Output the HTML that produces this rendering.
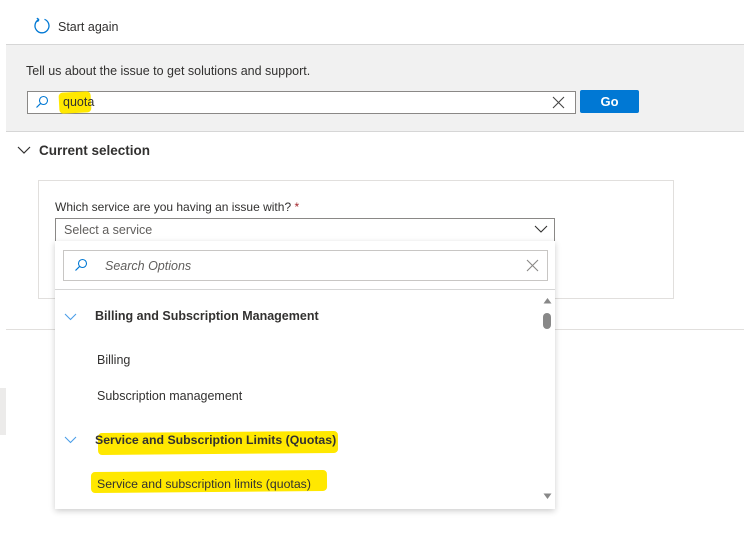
<!DOCTYPE html>
<html><head><style>
body{margin:0;width:744px;height:553px;background:#fff;font-family:"Liberation Sans",sans-serif;color:#323130;position:relative;overflow:hidden}
.a{position:absolute}
.hl{position:absolute;background:#ffe800;border-radius:4px}
</style></head><body>
<svg class="a" style="left:33px;top:17px" width="18" height="18" viewBox="0 0 18 18"><path d="M6 2.5A7 7 0 1 0 11.5 2.3" fill="none" stroke="#0078d4" stroke-width="1.3"/><path d="M6 2.5L3.8 1.2M6 2.5L4.5 4.8" stroke="#0078d4" stroke-width="1.2" fill="none"/></svg>
<div class="a" style="left:58px;top:20px;font-size:12.5px">Start again</div>
<div class="a" style="left:6px;top:44px;width:738px;height:86px;background:#f1f1f1;border-top:1px solid #d6d6d6;border-bottom:1px solid #d6d6d6"></div>
<div class="a" style="left:26px;top:64px;font-size:12.5px">Tell us about the issue to get solutions and support.</div>
<div class="a" style="left:27px;top:91px;width:547px;height:21px;background:#fff;border:1px solid #8a8886"></div>
<svg class="a" style="left:35px;top:95px" width="14" height="14" viewBox="0 0 14 14"><circle cx="8.5" cy="5.5" r="4" fill="none" stroke="#0078d4" stroke-width="1.1"/><path d="M5.6 8.4L1.5 12.5" stroke="#0078d4" stroke-width="1.2"/></svg>
<div class="hl" style="left:59px;top:92px;width:32px;height:21px;transform:rotate(-3deg)"></div>
<div class="a" style="left:63px;top:95px;font-size:12.5px">quota</div>
<svg class="a" style="left:552px;top:96px" width="13" height="13"><path d="M1 1L12 12M12 1L1 12" stroke="#444" stroke-width="1.1"/></svg>
<div class="a" style="left:580px;top:90px;width:59px;height:23px;background:#0078d4;border-radius:2px;color:#fff;font-weight:bold;font-size:13px;text-align:center;line-height:24px">Go</div>
<svg class="a" style="left:17px;top:145px" width="14" height="10"><path d="M1 2L7 8L13 2" fill="none" stroke="#323130" stroke-width="1.2"/></svg>
<div class="a" style="left:39px;top:143px;font-size:13.5px;font-weight:bold">Current selection</div>
<div class="a" style="left:38px;top:180px;width:634px;height:117px;border:1px solid #e1dfdd"></div>
<div class="a" style="left:6px;top:329px;width:738px;height:1px;background:#e1dfdd"></div>
<div class="a" style="left:0;top:388px;width:6px;height:47px;background:#ecebea"></div>
<div class="a" style="left:55px;top:200px;font-size:12px">Which service are you having an issue with? <span style="color:#a4262c">*</span></div>
<div class="a" style="left:55px;top:218px;width:498px;height:22px;border:1px solid #8a8886;background:#fff"></div>
<div class="a" style="left:64px;top:223px;font-size:12.5px;color:#605e5c">Select a service</div>
<svg class="a" style="left:534px;top:225px" width="14" height="9"><path d="M1 1L7 7L13 1" fill="none" stroke="#323130" stroke-width="1.1"/></svg>
<div class="a" style="left:55px;top:241px;width:500px;height:268px;background:#fff;box-shadow:0 2px 6px rgba(0,0,0,.2)"></div>
<div class="a" style="left:63px;top:250px;width:483px;height:29px;border:1px solid #c8c6c4"></div>
<svg class="a" style="left:74px;top:258px" width="14" height="14" viewBox="0 0 14 14"><circle cx="8.5" cy="5.5" r="4" fill="none" stroke="#0078d4" stroke-width="1.1"/><path d="M5.6 8.4L1.5 12.5" stroke="#0078d4" stroke-width="1.2"/></svg>
<div class="a" style="left:105px;top:259px;font-size:12.5px;font-style:italic;color:#605e5c">Search Options</div>
<svg class="a" style="left:526px;top:259px" width="13" height="13"><path d="M1 1L12 12M12 1L1 12" stroke="#8a8886" stroke-width="1.1"/></svg>
<div class="a" style="left:55px;top:289px;width:500px;height:1px;background:#d6d6d6"></div>
<svg class="a" style="left:543px;top:297px" width="9" height="7"><path d="M0.5 6.5L4.5 1L8.5 6.5Z" fill="#888"/></svg>
<div class="a" style="left:543px;top:313px;width:8px;height:16px;background:#888;border-radius:4px"></div>
<svg class="a" style="left:543px;top:493px" width="9" height="7"><path d="M0.5 0.5L4.5 6L8.5 0.5Z" fill="#888"/></svg>
<svg class="a" style="left:64px;top:313px" width="13" height="8"><path d="M1 1L6.5 6.5L12 1" fill="none" stroke="#4a9ee8" stroke-width="1.1"/></svg>
<div class="a" style="left:95px;top:309px;font-size:12.5px;font-weight:bold">Billing and Subscription Management</div>
<div class="a" style="left:97px;top:353px;font-size:12.5px">Billing</div>
<div class="a" style="left:97px;top:389px;font-size:12.5px">Subscription management</div>
<div class="hl" style="left:98px;top:432px;width:240px;height:22px;transform:rotate(-0.5deg)"></div>
<svg class="a" style="left:64px;top:436px" width="13" height="8"><path d="M1 1L6.5 6.5L12 1" fill="none" stroke="#4a9ee8" stroke-width="1.1"/></svg>
<div class="a" style="left:95px;top:433px;font-size:12.3px;font-weight:bold">Service and Subscription Limits (Quotas)</div>
<div class="hl" style="left:91px;top:471px;width:236px;height:21px;transform:rotate(-0.5deg)"></div>
<div class="a" style="left:97px;top:477px;font-size:12.3px">Service and subscription limits (quotas)</div>
</body></html>
